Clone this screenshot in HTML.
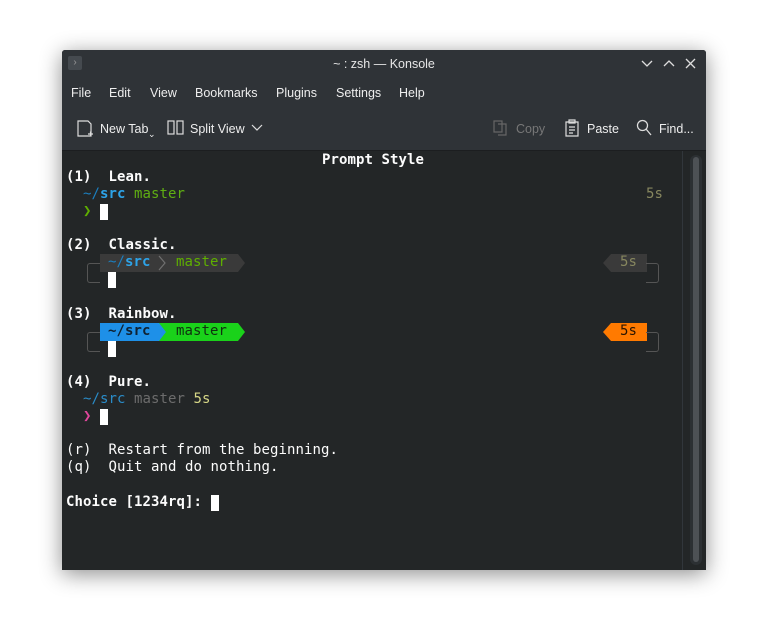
<!DOCTYPE html>
<html><head><meta charset="utf-8"><style>
body{margin:0;width:768px;height:643px;background:#fff;position:relative;overflow:hidden;font-family:"Liberation Sans",sans-serif}
.win{position:absolute;left:62px;top:50px;width:644px;height:520px;background:#2a2e32;box-shadow:0 4px 22px rgba(0,0,0,.45);border-radius:3px 3px 0 0;overflow:hidden}
.tb{position:absolute;left:0;top:0;width:644px;height:28px;background:#2f3337;color:#e6e6e6;font-size:12.5px}
.menu{position:absolute;top:28px;left:0;width:644px;height:28px;background:#2f3337;color:#eee;font-size:12.5px}
.menu span{position:absolute;top:8px}
.tool{position:absolute;top:56px;left:0;width:644px;height:44px;background:#2f3337;color:#eee;font-size:12.5px;border-bottom:1px solid #1c1e20}
.tool span{position:absolute;top:16px}
.term{position:absolute;top:101px;left:0;width:644px;height:419px;background:#232627}
.l{position:absolute;font-family:"DejaVu Sans Mono","Liberation Mono",monospace;font-size:14px;line-height:17px;white-space:pre;color:#fcfcfc;letter-spacing:0.07px;margin-top:1px}
b{font-weight:bold}
.cur{position:absolute;width:8px;height:16px;background:#fff;margin-top:1px}
</style></head><body>
<div class="win">
 <div class="tb">
  <div style="position:absolute;left:6px;top:6px;width:14px;height:14px;background:#454a4f;border-radius:2px;color:#999;font-size:10px;line-height:14px;text-align:center">›</div>
  <div style="position:absolute;left:0;width:644px;text-align:center;top:7px">~ : zsh — Konsole</div>
  <svg style="position:absolute;left:578px;top:8px" width="60" height="12" fill="none" stroke="#ddd" stroke-width="1.3"><path d="M2 3l5 5 5-5M24 8l5-5 5 5M46 1l9 9M55 1l-9 9"/></svg>
 </div>
 <div class="menu"><span style="left:9px">File</span><span style="left:47px">Edit</span><span style="left:88px">View</span><span style="left:133px">Bookmarks</span><span style="left:214px">Plugins</span><span style="left:274px">Settings</span><span style="left:337px">Help</span></div>
 <div class="tool">
  <svg style="position:absolute;left:15px;top:13px" width="18" height="20" fill="none" stroke="#ddd" stroke-width="1.2"><path d="M1 2h10l3 3v12H1zM11 15h5M13.5 12.5v5"/></svg>
  <span style="left:38px">New Tab</span><span style="left:86px;top:23px;font-size:9px">⌄</span>
  <svg style="position:absolute;left:105px;top:14px" width="18" height="16" fill="none" stroke="#ddd" stroke-width="1.2"><rect x="1" y="1" width="6" height="13"/><rect x="10" y="1" width="6" height="13"/></svg>
  <span style="left:128px">Split View</span>
  <svg style="position:absolute;left:189px;top:18px" width="12" height="8" fill="none" stroke="#ddd" stroke-width="1.2"><path d="M1 1l5 5 5-5"/></svg>
  <svg style="position:absolute;left:431px;top:14px" width="16" height="16" fill="none" stroke="#666" stroke-width="1.2"><path d="M1 1h8v11H1zM5 4h8v11H5"/></svg>
  <span style="left:454px;color:#777">Copy</span>
  <svg style="position:absolute;left:503px;top:13px" width="14" height="18" fill="none" stroke="#ddd" stroke-width="1.2"><path d="M1 3h12v14H1zM4 1h6v3H4zM4 8h6M4 11h6M4 14h4"/></svg>
  <span style="left:525px">Paste</span>
  <svg style="position:absolute;left:574px;top:13px" width="16" height="17" fill="none" stroke="#ddd" stroke-width="1.3"><circle cx="6.5" cy="6.5" r="5"/><path d="M10 10l5 6"/></svg>
  <span style="left:597px">Find...</span>
 </div>
 <div class="term">
  <div style="position:absolute;left:628px;top:4px;width:12px;height:410px;border-radius:6px;background:#2c3033"></div>
  <div style="position:absolute;left:631px;top:6px;width:6px;height:405px;border-radius:3px;background:#4d5155"></div>
  <div style="position:absolute;left:620px;top:0;width:1px;height:419px;background:#31363b"></div>
 </div>
</div>
<div class="l" style="left:322px;top:151px"><b>Prompt Style</b></div>
<div class="l" style="left:66px;top:168px"><b>(1)  Lean.</b></div>
<div class="l" style="left:66px;top:185px">  <span style="color:#1c7fbf">~/</span><b style="color:#2da3e8">src</b> <span style="color:#5fae12">master</span></div>
<div class="l" style="left:646px;top:185px;color:#87875f">5s</div>
<div class="l" style="left:66px;top:202px">  <b style="color:#5faf00">❯</b></div>
<div class="cur" style="left:100px;top:203px"></div>

<div class="l" style="left:66px;top:236px"><b>(2)  Classic.</b></div>
<div style="position:absolute;left:87px;top:263px;width:12px;height:18px;border:1px solid #555;border-right:none;border-radius:3px 0 0 3px"></div>
<svg style="position:absolute;left:100px;top:254px" width="146" height="18"><path d="M0 0h138l7 9-7 9H0z" fill="#3a3a3a"/><path d="M59 2l6 7-6 7" fill="none" stroke="#707070" stroke-width="1.2"/></svg>
<div class="l" style="left:108px;top:253px"><span style="color:#1c7fbf">~/</span><b style="color:#2da3e8">src</b>   <span style="color:#5faf00">master</span></div>
<div class="cur" style="left:108px;top:271px"></div>
<svg style="position:absolute;left:603px;top:254px" width="44" height="18"><path d="M8 0h36v18H8L0 9z" fill="#3a3a3a"/></svg>
<div class="l" style="left:620px;top:253px;color:#87875f">5s</div>
<div style="position:absolute;left:646px;top:263px;width:12px;height:18px;border:1px solid #555;border-left:none;border-radius:0 3px 3px 0"></div>

<div class="l" style="left:66px;top:305px"><b>(3)  Rainbow.</b></div>
<div style="position:absolute;left:87px;top:332px;width:12px;height:18px;border:1px solid #555;border-right:none;border-radius:3px 0 0 3px"></div>
<svg style="position:absolute;left:100px;top:323px" width="146" height="18"><path d="M0 0h138l7 9-7 9H0z" fill="#1ad21a"/><path d="M0 0h59l7 9-7 9H0z" fill="#1e90e8"/></svg>
<div class="l" style="left:108px;top:322px;color:#0f2233"><b>~/src</b>   <span style="color:#103010">master</span></div>
<div class="cur" style="left:108px;top:340px"></div>
<svg style="position:absolute;left:603px;top:323px" width="44" height="18"><path d="M8 0h36v18H8L0 9z" fill="#ff7a00"/></svg>
<div class="l" style="left:620px;top:322px;color:#2a1400">5s</div>
<div style="position:absolute;left:646px;top:332px;width:12px;height:18px;border:1px solid #555;border-left:none;border-radius:0 3px 3px 0"></div>

<div class="l" style="left:66px;top:373px"><b>(4)  Pure.</b></div>
<div class="l" style="left:66px;top:390px">  <span style="color:#2a8cc8">~/src</span> <span style="color:#6c6c6c">master</span> <span style="color:#d7d787">5s</span></div>
<div class="l" style="left:66px;top:407px">  <b style="color:#e0479c">❯</b></div>
<div class="cur" style="left:100px;top:408px"></div>

<div class="l" style="left:66px;top:441px">(r)  Restart from the beginning.</div>
<div class="l" style="left:66px;top:458px">(q)  Quit and do nothing.</div>
<div class="l" style="left:66px;top:493px"><b>Choice [1234rq]: </b></div>
<div class="cur" style="left:211px;top:494px"></div>
</body></html>
